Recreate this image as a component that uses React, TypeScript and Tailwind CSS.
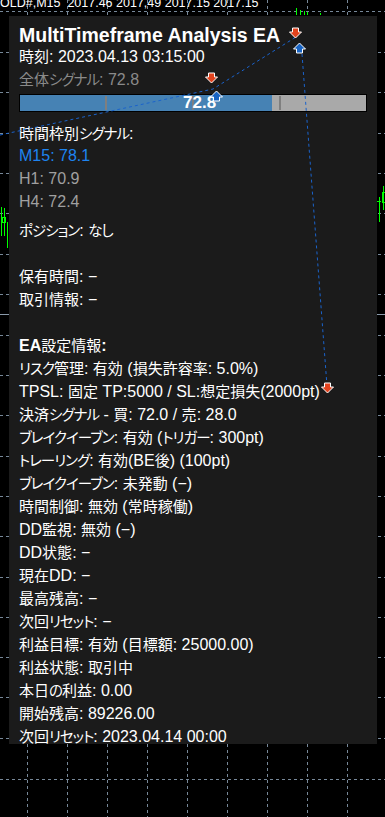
import React from 'react';

const vLines = [27, 67, 107, 147, 187, 227, 267, 307, 347];
const hLines = [11, 52, 92, 133, 173, 213, 254, 294, 335, 375, 415, 456, 496, 536, 577, 617, 657, 697, 738, 779];

const settings: { label: string; value: string }[] = [
  { label: 'リスク管理', value: '有効 (損失許容率: 5.0%)' },
  { label: 'TPSL', value: '固定 TP:5000 / SL:想定損失(2000pt)' },
  { label: '決済シグナル - 買', value: '72.0 / 売: 28.0' },
  { label: 'ブレイクイーブン', value: '有効 (トリガー: 300pt)' },
  { label: 'トレーリング', value: '有効(BE後) (100pt)' },
  { label: 'ブレイクイーブン', value: '未発動 (−)' },
  { label: '時間制御', value: '無効 (常時稼働)' },
  { label: 'DD監視', value: '無効 (−)' },
  { label: 'DD状態', value: '−' },
  { label: '現在DD', value: '−' },
  { label: '最高残高', value: '−' },
  { label: '次回リセット', value: '−' },
  { label: '利益目標', value: '有効 (目標額: 25000.00)' },
  { label: '利益状態', value: '取引中' },
  { label: '本日の利益', value: '0.00' },
  { label: '開始残高', value: '89226.00' },
  { label: '次回リセット', value: '2023.04.14 00:00' },
];

// the terminal font has narrow kana and slightly smaller kanji than its latin text,
// so split a string into runs and size each run on its own
function Jp({ s }: { s: string }) {
  const parts = s.match(/[\u3040-\u30ff]+|[\u3000-\u303f\u3400-\u9fff\uff00-\uffef]+|[^\u3000-\u30ff\u3400-\u9fff\uff00-\uffef]+/g) || [];
  return (
    <>
      {parts.map((p, i) => {
        const c = p.charCodeAt(0);
        if (c >= 0x3040 && c <= 0x30ff) {
          return (
            <span key={i} className="text-[14.5px] tracking-[-1px] font-['Noto_Sans_CJK_JP',sans-serif] [font-feature-settings:'palt']">
              {p}
            </span>
          );
        }
        if (c >= 0x3000) {
          return (
            <span key={i} className="text-[15px] font-['Noto_Sans_CJK_JP',sans-serif]">
              {p}
            </span>
          );
        }
        return <span key={i}>{p}</span>;
      })}
    </>
  );
}

function DownArrow({ x, y }: { x: number; y: number }) {
  // sell arrow, x = center, y = top
  const pts = [
    [x - 3, y],
    [x + 3, y],
    [x + 3, y + 4],
    [x + 6, y + 4],
    [x, y + 10],
    [x - 6, y + 4],
    [x - 3, y + 4],
  ];
  return <polygon points={pts.map((p) => p.join(',')).join(' ')} fill="#e2431e" stroke="#ffffff" strokeWidth="1" />;
}

function UpArrow({ x, y }: { x: number; y: number }) {
  // buy arrow, x = center, y = tip
  const pts = [
    [x, y],
    [x + 6, y + 6],
    [x + 3, y + 6],
    [x + 3, y + 10],
    [x - 3, y + 10],
    [x - 3, y + 6],
    [x - 6, y + 6],
  ];
  return <polygon points={pts.map((p) => p.join(',')).join(' ')} fill="#1864c4" stroke="#ffffff" strokeWidth="1" />;
}

function ChartBackground() {
  return (
    <svg className="absolute inset-0" width="385" height="817">
      {vLines.map((x) => (
        <line key={'v' + x} x1={x + 0.5} y1="0" x2={x + 0.5} y2="817" stroke="#778899" strokeDasharray="3 3" />
      ))}
      {hLines.map((y) => (
        <line key={'h' + y} x1="0" y1={y + 0.5} x2="385" y2={y + 0.5} stroke="#778899" strokeDasharray="3 3" />
      ))}
      <line x1="0" y1="314.5" x2="385" y2="314.5" stroke="#8a9aaa" />
      {/* candles peeking out at the edges */}
      <g stroke="#00ff00" fill="none">
        <line x1="379.5" y1="197" x2="379.5" y2="222" />
        <line x1="377" y1="201.5" x2="381" y2="201.5" />
        <line x1="383.5" y1="186" x2="383.5" y2="210" />
        <rect x="382.5" y="192.5" width="3" height="10" />
        <line x1="1.5" y1="207" x2="1.5" y2="236" />
        <rect x="2.5" y="217.5" width="3" height="5" />
        <line x1="4.5" y1="208" x2="4.5" y2="236" />
        <line x1="7.5" y1="222" x2="7.5" y2="248" />
        <line x1="296.5" y1="8" x2="296.5" y2="15" />
        <line x1="300.5" y1="10" x2="300.5" y2="15" />
        <line x1="304.5" y1="11" x2="304.5" y2="15" />
        <line x1="307.5" y1="12" x2="307.5" y2="15" />
        <line x1="320.5" y1="13" x2="320.5" y2="15" />
      </g>
    </svg>
  );
}

function ChartOverlay() {
  return (
    <svg className="absolute inset-0 pointer-events-none" width="385" height="817">
      <g stroke="#1a63cc" strokeWidth="1" strokeDasharray="3 3" fill="none">
        <polyline points="0,135 213,89 296,37" />
        <line x1="302" y1="54" x2="327" y2="386" />
      </g>
      <DownArrow x={295.5} y={28} />
      <UpArrow x={299.5} y={43} />
      <DownArrow x={211.5} y={73} />
      <UpArrow x={216.5} y={91} />
      <DownArrow x={327.5} y={383} />
    </svg>
  );
}

function Row({ label, value, className = 'text-white' }: { label: string; value: string; className?: string }) {
  return (
    <div className={`h-[23px] flex items-center text-[16px] whitespace-nowrap ${className}`}>
      <span>
        <Jp s={`${label}: ${value}`} />
      </span>
    </div>
  );
}

export default function App() {
  return (
    <div className="relative w-[385px] h-[817px] overflow-hidden bg-black font-['Liberation_Sans','Noto_Sans_CJK_JP',sans-serif]">
      <ChartBackground />
      <div className="absolute left-0 top-[-4px] text-[12.5px] text-white whitespace-pre leading-[14px]">
        {'OLD#,M15  2017.46 2017,49 2017.15 2017.15'}
      </div>

      <div className="relative pt-[16px] pl-[9px]">
        <div className="w-[368px] h-[728px] overflow-hidden bg-[#1b1b1b] pl-[10px] pt-[9px]">
          <div className="h-[22px] flex items-center text-[19.5px] font-bold text-white whitespace-nowrap">
            MultiTimeframe Analysis EA
          </div>
          <div className="h-[20px] flex items-center text-[16px] text-white">
            <span>
              <Jp s="時刻: 2023.04.13 03:15:00" />
            </span>
          </div>
          <div className="mt-[3px] h-[20px] flex items-center text-[16px] text-[#8a8a8a]">
            <span>
              <Jp s="全体シグナル: 72.8" />
            </span>
          </div>

          <div className="relative mt-[4px] w-[348px] h-[18px] border border-black flex bg-[#a9a9a9]">
            <div className="h-full w-[252px] bg-[#4682b4]" />
            <div className="absolute left-[85px] top-[1px] bottom-[1px] w-[2px] bg-[#7f7f7f]" />
            <div className="absolute left-[172px] top-[1px] bottom-[1px] w-[2px] bg-[#7f7f7f]" />
            <div className="absolute left-[259px] top-[1px] bottom-[1px] w-[2px] bg-[#7f7f7f]" />
            <div className="absolute left-[163px] top-[-2px] text-[17px] font-bold text-white leading-[20px]">72.8</div>
          </div>

          <div className="mt-[11px] h-[21px] flex items-center text-[16px] text-white">
            <span>
              <Jp s="時間枠別シグナル:" />
            </span>
          </div>
          <Row label="M15" value="78.1" className="text-[#1e84f0]" />
          <Row label="H1" value="70.9" className="text-[#a0a0a0]" />
          <Row label="H4" value="72.4" className="text-[#a0a0a0]" />

          <div className="mt-[6px]">
            <Row label="ポジション" value="なし" />
          </div>

          <div className="mt-[23px]">
            <Row label="保有時間" value="−" />
            <Row label="取引情報" value="−" />
          </div>

          <div className="mt-[23px] h-[23px] flex items-center text-[16px] text-white">
            <span>
              <span className="font-bold">EA</span>
              <Jp s="設定情報" />
              <span className="font-bold">:</span>
            </span>
          </div>
          {settings.map((s, i) => (
            <Row key={i} label={s.label} value={s.value} />
          ))}
        </div>
      </div>

      <ChartOverlay />
    </div>
  );
}
